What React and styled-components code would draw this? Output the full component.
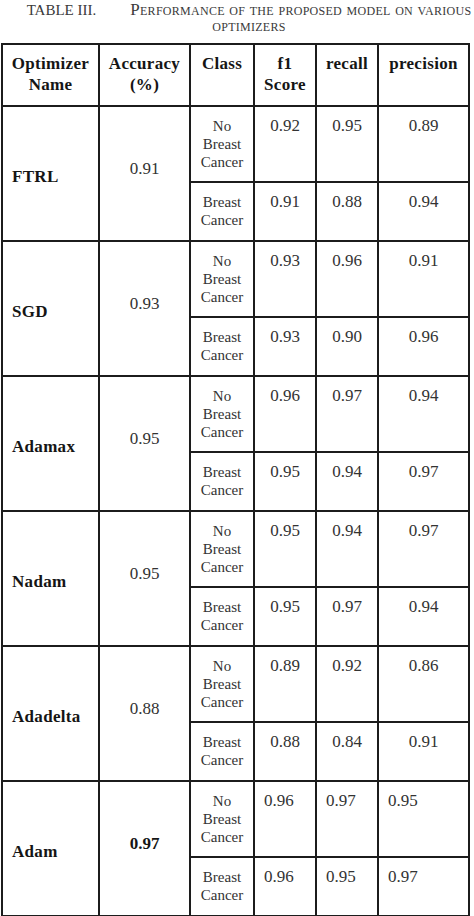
import React from "react";
import styled, { createGlobalStyle } from "styled-components";

const GlobalStyle = createGlobalStyle`
  html, body {
    margin: 0;
    padding: 0;
    background: #fff;
  }
  body {
    font-family: "Liberation Serif", "Times New Roman", serif;
    color: #222;
  }
`;

const Page = styled.div`
  width: 474px;
  height: 916px;
  overflow: hidden;
  background: #fff;
`;

const Caption = styled.div`
  height: 43px;
  box-sizing: border-box;
  padding: 2px 0 0 24px;
  text-align: center;
  font-family: "Liberation Serif", "Times New Roman", serif;
  font-size: 15px;
  line-height: 15px;
  color: #3a3a3a;
`;

const CaptionLabel = styled.span`
  margin-right: 34px;
`;

const CaptionTitle = styled.span`
  font-size: 17px;
  line-height: 15px;
  font-variant: small-caps;
  letter-spacing: 0.28px;
`;

const Table = styled.table`
  margin-left: 1px;
  width: 467px;
  border-collapse: collapse;
  table-layout: fixed;
  font-family: "Liberation Serif", "Times New Roman", serif;
`;

const HeadCell = styled.th`
  border: 2px solid #1c1c1c;
  padding: 8px 1px 0;
  vertical-align: top;
  text-align: center;
  font-size: 17px;
  line-height: 21px;
  font-weight: bold;
  letter-spacing: 0.3px;
  color: #151515;
`;

const NameCell = styled.td`
  border: 2px solid #1c1c1c;
  padding: 6px 2px 0 9px;
  vertical-align: middle;
  text-align: left;
  font-size: 17px;
  font-weight: bold;
  letter-spacing: 0.3px;
  color: #151515;
`;

const AccuracyCell = styled.td`
  border: 2px solid #1c1c1c;
  padding: 0 2px 10px;
  vertical-align: middle;
  text-align: center;
  font-size: 17px;
  font-weight: ${p => (p.$best ? "bold" : "normal")};
  color: ${p => (p.$best ? "#151515" : "#333")};
`;

const ClassCell = styled.td`
  border: 2px solid #1c1c1c;
  padding: 10px 2px 0;
  vertical-align: top;
  text-align: center;
  font-size: 15px;
  line-height: 18px;
  color: #333;
`;

const ValueCell = styled.td`
  border: 2px solid #1c1c1c;
  padding: ${p => (p.$left ? "10px 2px 0 9px" : "10px 2px 0")};
  vertical-align: top;
  text-align: ${p => (p.$left ? "left" : "center")};
  font-size: 17px;
  line-height: 18px;
  color: #333;
`;

const FirstRow = styled.tr`
  height: 76px;
`;

const SecondRow = styled.tr`
  height: 59px;
`;

const HeadRow = styled.tr`
  height: 62px;
`;

const optimizers = [
  { name: "FTRL", accuracy: "0.91", rows: [["0.92", "0.95", "0.89"], ["0.91", "0.88", "0.94"]] },
  { name: "SGD", accuracy: "0.93", rows: [["0.93", "0.96", "0.91"], ["0.93", "0.90", "0.96"]] },
  { name: "Adamax", accuracy: "0.95", rows: [["0.96", "0.97", "0.94"], ["0.95", "0.94", "0.97"]] },
  { name: "Nadam", accuracy: "0.95", rows: [["0.95", "0.94", "0.97"], ["0.95", "0.97", "0.94"]] },
  { name: "Adadelta", accuracy: "0.88", rows: [["0.89", "0.92", "0.86"], ["0.88", "0.84", "0.91"]] },
  { name: "Adam", accuracy: "0.97", best: true, rows: [["0.96", "0.97", "0.95"], ["0.96", "0.95", "0.97"]] },
];

const OptimizerGroup = ({ item }) => {
  const [noCancer, cancer] = item.rows;
  return (
    <>
      <FirstRow>
        <NameCell rowSpan={2}>{item.name}</NameCell>
        <AccuracyCell rowSpan={2} $best={item.best}>
          {item.accuracy}
        </AccuracyCell>
        <ClassCell>
          No
          <br />
          Breast
          <br />
          Cancer
        </ClassCell>
        {noCancer.map((v, i) => (
          <ValueCell key={i} $left={item.best}>
            {v}
          </ValueCell>
        ))}
      </FirstRow>
      <SecondRow>
        <ClassCell>
          Breast
          <br />
          Cancer
        </ClassCell>
        {cancer.map((v, i) => (
          <ValueCell key={i} $left={item.best}>
            {v}
          </ValueCell>
        ))}
      </SecondRow>
    </>
  );
};

export default function App() {
  return (
    <Page>
      <GlobalStyle />
      <Caption>
        <CaptionLabel>TABLE III.</CaptionLabel>
        <CaptionTitle>Performance of the proposed model on various optimizers</CaptionTitle>
      </Caption>
      <Table>
        <colgroup>
          <col style={{ width: 97 }} />
          <col style={{ width: 91 }} />
          <col style={{ width: 64 }} />
          <col style={{ width: 62 }} />
          <col style={{ width: 62 }} />
          <col style={{ width: 91 }} />
        </colgroup>
        <thead>
          <HeadRow>
            <HeadCell>
              Optimizer
              <br />
              Name
            </HeadCell>
            <HeadCell>
              Accuracy
              <br />
              (%)
            </HeadCell>
            <HeadCell>Class</HeadCell>
            <HeadCell>
              f1
              <br />
              Score
            </HeadCell>
            <HeadCell>recall</HeadCell>
            <HeadCell>precision</HeadCell>
          </HeadRow>
        </thead>
        <tbody>
          {optimizers.map(item => (
            <OptimizerGroup key={item.name} item={item} />
          ))}
        </tbody>
      </Table>
    </Page>
  );
}
